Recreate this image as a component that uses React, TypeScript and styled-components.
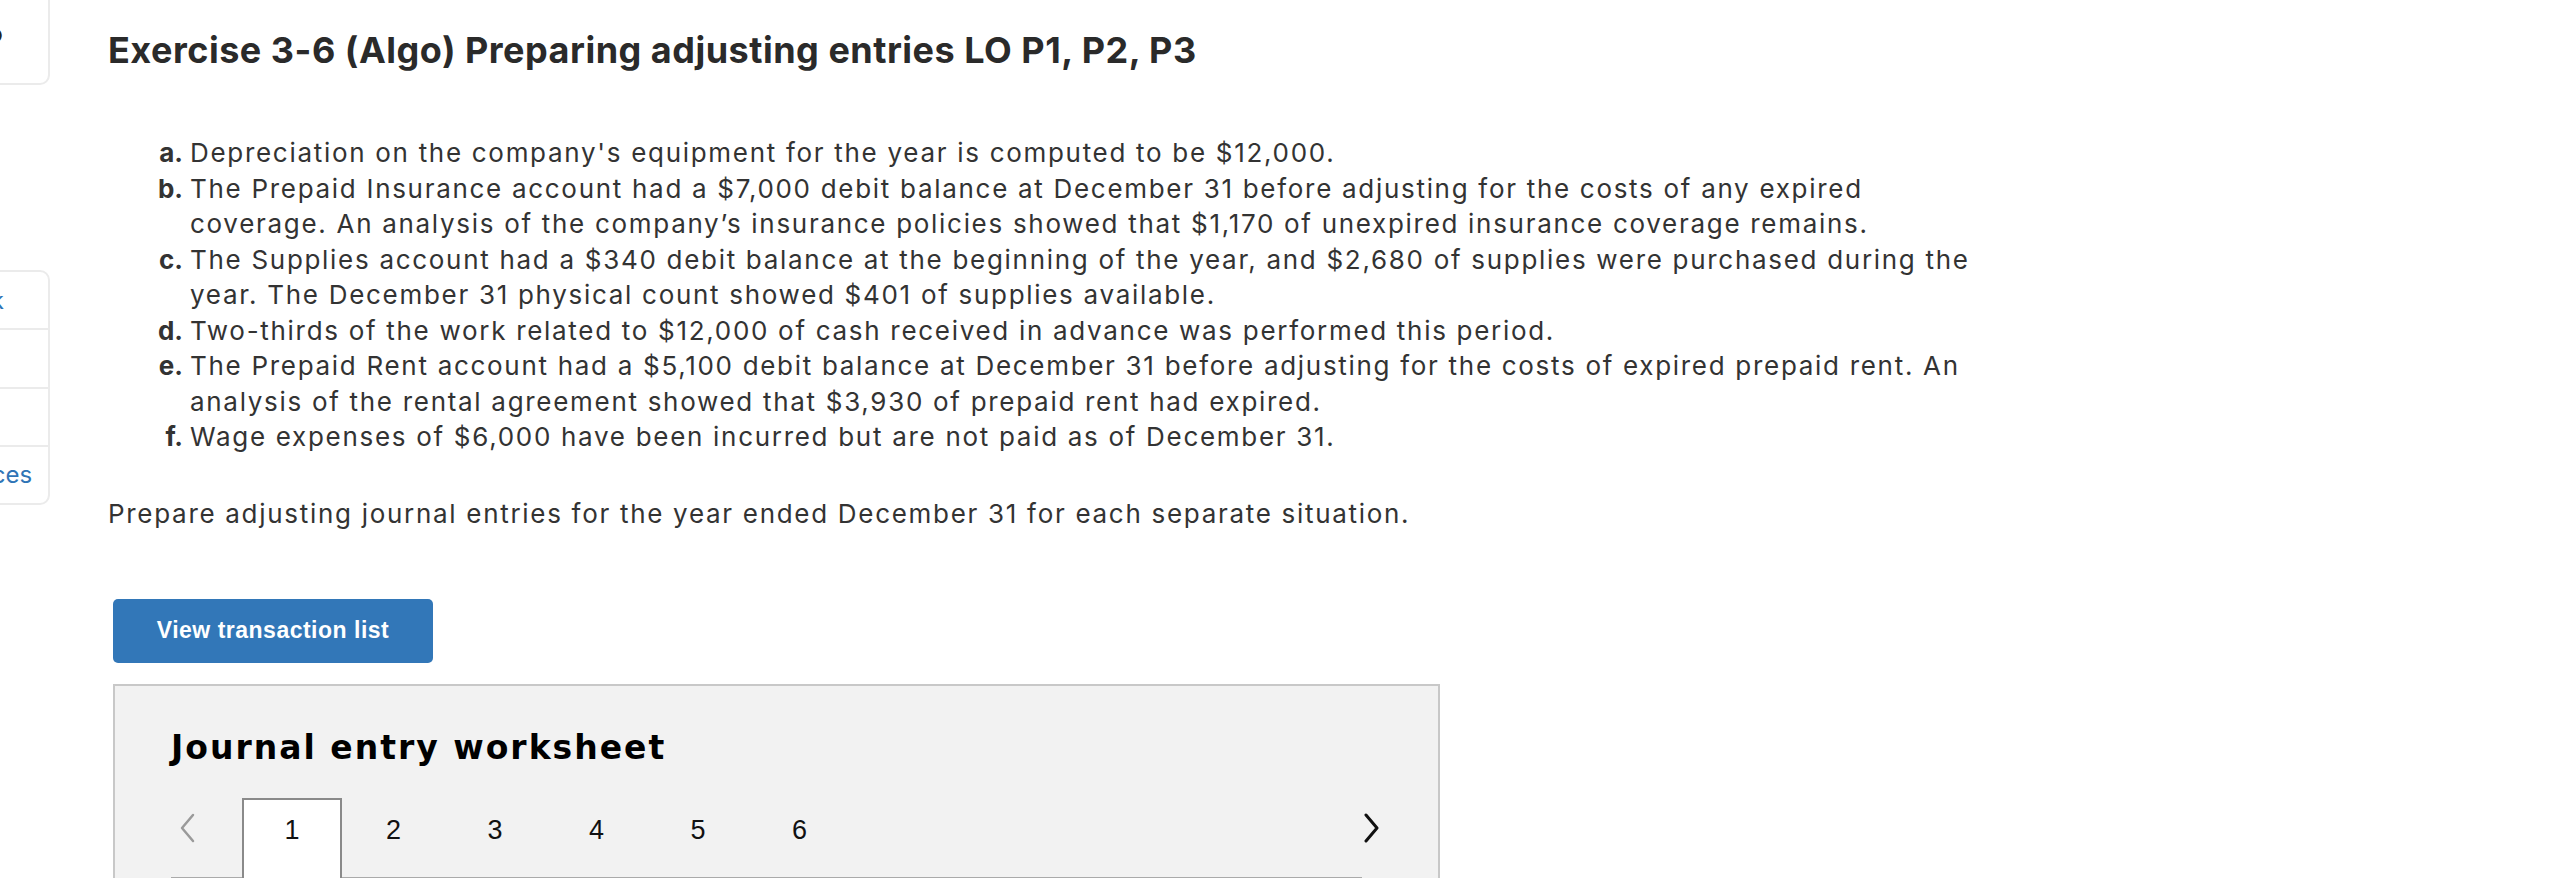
import React from 'react';
import styled, { createGlobalStyle } from 'styled-components';

const GlobalStyle = createGlobalStyle`
	html, body {
		margin: 0;
		padding: 0;
		background: #ffffff;
		overflow: hidden;
	}
	body {
		font-family: Inter, Lato, 'Liberation Sans', sans-serif;
		color: #333333;
	}
`;

const Page = styled.div`
	display: flex;
	align-items: flex-start;
	width: 2567px;
	height: 878px;
	overflow: hidden;
`;

const Sidebar = styled.aside`
	width: 50px;
	flex-shrink: 0;
	display: flex;
	flex-direction: column;
`;

const SideCard = styled.div<{ $top?: boolean }>`
	width: 164px;
	margin-left: -114px;
	box-sizing: border-box;
	border: 2px solid #ebebeb;
	border-radius: 10px;
	background: #fff;
	margin-top: ${(p) => (p.$top ? '-30px' : '185px')};
	height: ${(p) => (p.$top ? '115px' : '235px')};
	display: flex;
	flex-direction: column;
	padding-top: ${(p) => (p.$top ? '47px' : '0')};
`;

const SideTopText = styled.div`
	text-align: right;
	padding-right: 45px;
	font-size: 24px;
	line-height: 30px;
	color: #222;
`;

const SideItem = styled.div`
	height: 59px;
	display: flex;
	align-items: center;
	justify-content: center;
	font-size: 24px;
	color: #2f74b6;
	& + & {
		border-top: 2px solid #ebebeb;
	}
`;

const Main = styled.main`
	flex: 1;
	padding-left: 58px;
`;

const Title = styled.h1`
	margin: 28px 0 0;
	font-size: 36px;
	line-height: 44px;
	font-weight: 700;
	letter-spacing: 0.5px;
	color: #2a2a2a;
`;

const ItemList = styled.div`
	margin-top: 63px;
	margin-left: 40px;
	width: 1837px;
	display: grid;
	grid-template-columns: 35px 1fr;
	column-gap: 7px;
	font-size: 26px;
	line-height: 35.5px;
	letter-spacing: 1.7px;
`;

const ItemLabel = styled.span`
	font-weight: 700;
	text-align: right;
	letter-spacing: 0;
`;

const ItemText = styled.span``;

const Instruction = styled.p`
	margin: 41.5px 0 0;
	font-size: 26px;
	line-height: 35.5px;
	letter-spacing: 1.7px;
`;

const ViewButton = styled.button`
	display: block;
	margin: 67px 0 0 5px;
	width: 320px;
	height: 64px;
	border: none;
	border-radius: 5px;
	background: #3277b8;
	color: #fff;
	font-family: 'Liberation Sans', Arial, sans-serif;
	font-weight: 700;
	font-size: 23px;
	letter-spacing: 0.5px;
	padding: 0;
`;

const Worksheet = styled.section`
	margin: 21px 0 0 5px;
	width: 1327px;
	box-sizing: border-box;
	border: 2px solid #c8c8c8;
	border-bottom: none;
	background: #f2f2f2;
	padding: 42px 76px 0 56px;
`;

const WsTitle = styled.h2`
	margin: 0;
	font-family: 'DejaVu Sans', Verdana, sans-serif;
	font-weight: 700;
	font-size: 33px;
	line-height: 40px;
	letter-spacing: 2px;
	color: #000;
`;

const TabBar = styled.div`
	margin-top: 30px;
	height: 79px;
	display: flex;
	align-items: flex-start;
	border-bottom: 2px solid #aaaaaa;
`;

const Arrow = styled.button<{ $next?: boolean }>`
	border: none;
	background: none;
	padding: 0;
	margin: 15px ${(p) => (p.$next ? '-20px' : '0')} 0 ${(p) => (p.$next ? 'auto' : '6px')};
	width: 22px;
	height: 30px;
	color: ${(p) => (p.$next ? '#111111' : '#9a9a9a')};
	svg {
		display: block;
	}
`;

const Tab = styled.div<{ $active?: boolean }>`
	width: 100px;
	height: ${(p) => (p.$active ? '81px' : '79px')};
	margin-left: ${(p) => (p.$active ? '43px' : '1.5px')};
	box-sizing: border-box;
	padding-top: 14px;
	text-align: center;
	font-family: 'Liberation Sans', Arial, sans-serif;
	font-size: 27px;
	line-height: 32px;
	color: #111;
	background: ${(p) => (p.$active ? '#ffffff' : 'transparent')};
	border: 2px solid ${(p) => (p.$active ? '#8a8a8a' : 'transparent')};
	border-bottom: none;
`;

const items: [string, string][] = [
	['a.', "Depreciation on the company's equipment for the year is computed to be $12,000."],
	[
		'b.',
		'The Prepaid Insurance account had a $7,000 debit balance at December 31 before adjusting for the costs of any expired coverage. An analysis of the company’s insurance policies showed that $1,170 of unexpired insurance coverage remains.',
	],
	[
		'c.',
		'The Supplies account had a $340 debit balance at the beginning of the year, and $2,680 of supplies were purchased during the year. The December 31 physical count showed $401 of supplies available.',
	],
	['d.', 'Two-thirds of the work related to $12,000 of cash received in advance was performed this period.'],
	[
		'e.',
		'The Prepaid Rent account had a $5,100 debit balance at December 31 before adjusting for the costs of expired prepaid rent. An analysis of the rental agreement showed that $3,930 of prepaid rent had expired.',
	],
	['f.', 'Wage expenses of $6,000 have been incurred but are not paid as of December 31.'],
];

const Chevron = ({ dir }: { dir: 'left' | 'right' }) => (
	<svg width="22" height="30" viewBox="0 0 22 30" fill="none">
		<polyline
			points={dir === 'left' ? '16,2 5,15 16,28' : '6,2 17,15 6,28'}
			stroke="currentColor"
			strokeWidth={dir === 'left' ? 2.5 : 3}
			strokeLinecap="round"
			strokeLinejoin="round"
		/>
	</svg>
);

export default function App() {
	return (
		<>
			<GlobalStyle />
			<Page>
				<Sidebar>
					<SideCard $top>
						<SideTopText>Info</SideTopText>
					</SideCard>
					<SideCard>
						<SideItem>eBook</SideItem>
						<SideItem>Hint</SideItem>
						<SideItem>Print</SideItem>
						<SideItem>References</SideItem>
					</SideCard>
				</Sidebar>
				<Main>
					<Title>Exercise 3-6 (Algo) Preparing adjusting entries LO P1, P2, P3</Title>
					<ItemList>
						{items.map(([label, text]) => (
							<React.Fragment key={label}>
								<ItemLabel>{label}</ItemLabel>
								<ItemText>{text}</ItemText>
							</React.Fragment>
						))}
					</ItemList>
					<Instruction>
						Prepare adjusting journal entries for the year ended December 31 for each separate situation.
					</Instruction>
					<ViewButton>View transaction list</ViewButton>
					<Worksheet>
						<WsTitle>Journal entry worksheet</WsTitle>
						<TabBar>
							<Arrow aria-label="previous">
								<Chevron dir="left" />
							</Arrow>
							{[1, 2, 3, 4, 5, 6].map((n) => (
								<Tab key={n} $active={n === 1}>
									{n}
								</Tab>
							))}
							<Arrow $next aria-label="next">
								<Chevron dir="right" />
							</Arrow>
						</TabBar>
					</Worksheet>
				</Main>
			</Page>
		</>
	);
}
